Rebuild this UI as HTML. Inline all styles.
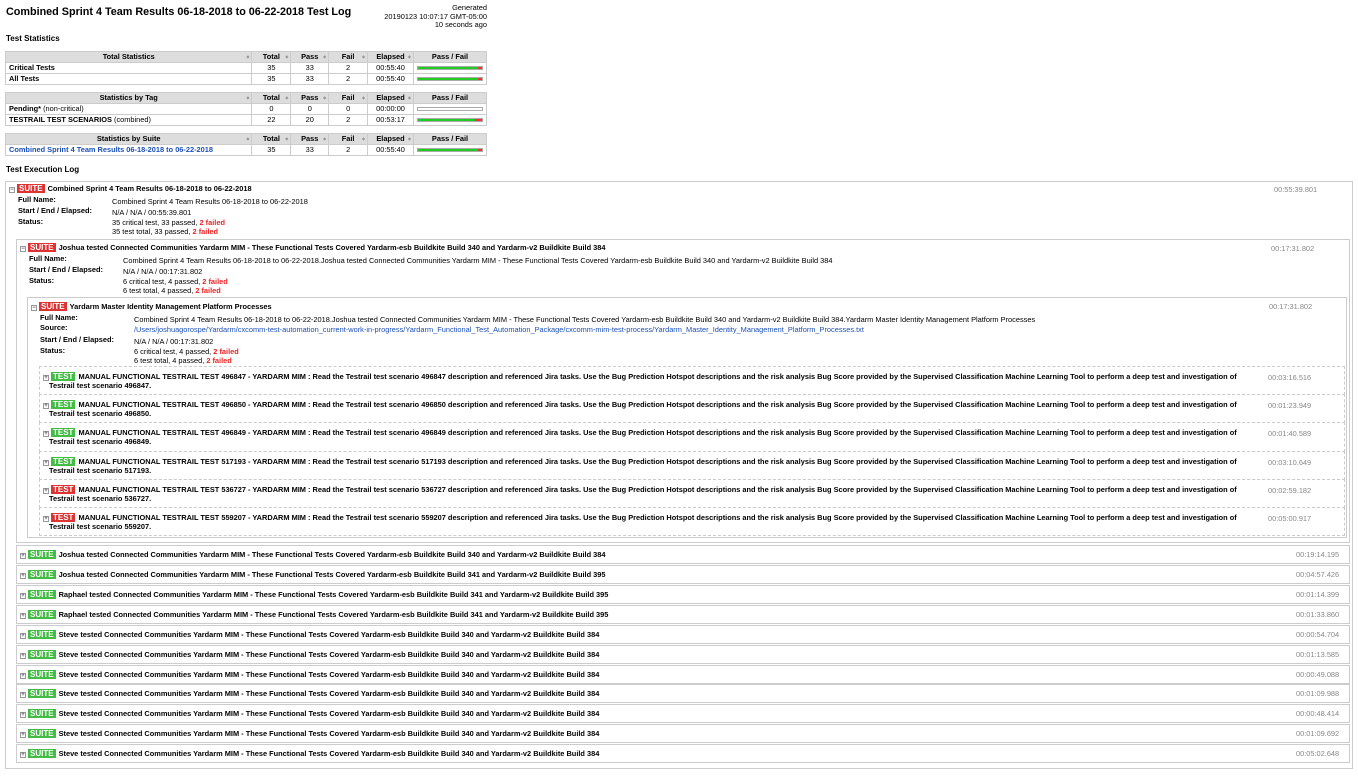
<!DOCTYPE html>
<html><head><meta charset="utf-8"><style>
*{margin:0;padding:0;box-sizing:border-box}
body{width:1358px;height:778px;background:#fff;font-family:"Liberation Sans",Arial,sans-serif;color:#000;position:relative;overflow:hidden;font-size:7.4px}
.a{position:absolute;white-space:nowrap}
.b{font-weight:bold}
h1{position:absolute;left:6px;top:6px;font-size:10.8px;font-weight:bold;white-space:nowrap}
.gen{position:absolute;right:871px;top:4px;text-align:right;font-size:7.4px;line-height:8.5px}
table{position:absolute;left:5px;width:482px;border-collapse:collapse;font-size:7.4px}
td,th{border:1px solid #ccc;height:11px;padding:0 3px;line-height:10px}
th{background:#ddd;font-weight:bold;position:relative}
th.s:after{content:"\25C6";position:absolute;right:2px;top:0;font-size:4px;color:#999}
td.n{text-align:center}
.bar{height:4px;width:66px;margin:0 auto;background:#2c2;border:1px solid #aaa;position:relative}
.bar i{position:absolute;right:0;top:0;height:2px;width:4px;background:#e33}
.box{position:absolute;border:1px solid #ccc}
.tb{position:absolute;border:1px dashed #ccc;border-right-style:dashed}
.bd{display:inline-block;color:#fff;font-weight:bold;font-size:8px;line-height:9px;padding:0 2px;margin-right:3px;vertical-align:0}
.r{background:#d33}.g{background:#4b4}
.pm{display:inline-block;width:6px;height:6px;border:1px solid #999;font-size:6px;line-height:4px;text-align:center;color:#555;margin-right:2px;vertical-align:0}
.el{position:absolute;color:#888;white-space:nowrap}
.f{color:#e22}
.lnk{color:#1a4fb8}
</style></head><body>
<h1>Combined Sprint 4 Team Results 06-18-2018 to 06-22-2018 Test Log</h1>
<div class="gen">Generated<br>20190123 10:07:17 GMT-05:00<br>10 seconds ago</div>
<div class="a b" style="left:6px;top:34px;font-size:8px">Test Statistics</div>
<table style="top:51px"><tr><th class="s" style="width:248px">Total Statistics</th><th class="s" style="width:39px">Total</th><th class="s" style="width:38px">Pass</th><th class="s" style="width:39px">Fail</th><th class="s" style="width:46px">Elapsed</th><th>Pass / Fail</th></tr>
<tr><td class="b">Critical Tests</td><td class="n">35</td><td class="n">33</td><td class="n">2</td><td class="n">00:55:40</td><td><div class="bar"><i></i></div></td></tr>
<tr><td class="b">All Tests</td><td class="n">35</td><td class="n">33</td><td class="n">2</td><td class="n">00:55:40</td><td><div class="bar"><i></i></div></td></tr></table>
<table style="top:92px"><tr><th class="s" style="width:248px">Statistics by Tag</th><th class="s" style="width:39px">Total</th><th class="s" style="width:38px">Pass</th><th class="s" style="width:39px">Fail</th><th class="s" style="width:46px">Elapsed</th><th>Pass / Fail</th></tr>
<tr><td><b>Pending*</b> (non-critical)</td><td class="n">0</td><td class="n">0</td><td class="n">0</td><td class="n">00:00:00</td><td><div class="bar" style="background:#fff"></div></td></tr>
<tr><td><b>TESTRAIL TEST SCENARIOS</b> (combined)</td><td class="n">22</td><td class="n">20</td><td class="n">2</td><td class="n">00:53:17</td><td><div class="bar"><i style="width:7px"></i></div></td></tr></table>
<table style="top:133px"><tr><th class="s" style="width:248px">Statistics by Suite</th><th class="s" style="width:39px">Total</th><th class="s" style="width:38px">Pass</th><th class="s" style="width:39px">Fail</th><th class="s" style="width:46px">Elapsed</th><th>Pass / Fail</th></tr>
<tr><td class="b lnk">Combined Sprint 4 Team Results 06-18-2018 to 06-22-2018</td><td class="n">35</td><td class="n">33</td><td class="n">2</td><td class="n">00:55:40</td><td><div class="bar"><i></i></div></td></tr></table>
<div class="a b" style="left:6px;top:165px;font-size:8px">Test Execution Log</div>

<div class="box" style="left:5px;top:181px;width:1348px;height:588px"></div>
<div class="a b" style="left:9px;top:184px"><span class="pm">−</span><span class="bd r">SUITE</span>Combined Sprint 4 Team Results 06-18-2018 to 06-22-2018</div>
<div class="el" style="left:1274px;top:185px">00:55:39.801</div>
<div class="a b" style="left:18px;top:195px">Full Name:</div><div class="a" style="left:112px;top:197px">Combined Sprint 4 Team Results 06-18-2018 to 06-22-2018</div>
<div class="a b" style="left:18px;top:206px">Start / End / Elapsed:</div><div class="a" style="left:112px;top:208px">N/A / N/A / 00:55:39.801</div>
<div class="a b" style="left:18px;top:217px">Status:</div><div class="a" style="left:112px;top:219px;line-height:8.5px">35 critical test, 33 passed, <b class="f">2 failed</b><br>35 test total, 33 passed, <b class="f">2 failed</b></div>

<div class="box" style="left:16px;top:239px;width:1334px;height:304px"></div>
<div class="a b" style="left:20px;top:243px"><span class="pm">−</span><span class="bd r">SUITE</span>Joshua tested Connected Communities Yardarm MIM - These Functional Tests Covered Yardarm-esb Buildkite Build 340 and Yardarm-v2 Buildkite Build 384</div>
<div class="el" style="left:1271px;top:244px">00:17:31.802</div>
<div class="a b" style="left:29px;top:254px">Full Name:</div><div class="a" style="left:123px;top:256px">Combined Sprint 4 Team Results 06-18-2018 to 06-22-2018.Joshua tested Connected Communities Yardarm MIM - These Functional Tests Covered Yardarm-esb Buildkite Build 340 and Yardarm-v2 Buildkite Build 384</div>
<div class="a b" style="left:29px;top:265px">Start / End / Elapsed:</div><div class="a" style="left:123px;top:267px">N/A / N/A / 00:17:31.802</div>
<div class="a b" style="left:29px;top:276px">Status:</div><div class="a" style="left:123px;top:278px;line-height:8.5px">6 critical test, 4 passed, <b class="f">2 failed</b><br>6 test total, 4 passed, <b class="f">2 failed</b></div>

<div class="box" style="left:27px;top:297px;width:1320px;height:241px"></div>
<div class="a b" style="left:31px;top:302px"><span class="pm">−</span><span class="bd r">SUITE</span>Yardarm Master Identity Management Platform Processes</div>
<div class="el" style="left:1269px;top:302px">00:17:31.802</div>
<div class="a b" style="left:40px;top:313px">Full Name:</div><div class="a" style="left:134px;top:315px">Combined Sprint 4 Team Results 06-18-2018 to 06-22-2018.Joshua tested Connected Communities Yardarm MIM - These Functional Tests Covered Yardarm-esb Buildkite Build 340 and Yardarm-v2 Buildkite Build 384.Yardarm Master Identity Management Platform Processes</div>
<div class="a b" style="left:40px;top:323px">Source:</div><div class="a lnk" style="left:134px;top:325px">/Users/joshuagorospe/Yardarm/cxcomm-test-automation_current-work-in-progress/Yardarm_Functional_Test_Automation_Package/cxcomm-mim-test-process/Yardarm_Master_Identity_Management_Platform_Processes.txt</div>
<div class="a b" style="left:40px;top:335px">Start / End / Elapsed:</div><div class="a" style="left:134px;top:337px">N/A / N/A / 00:17:31.802</div>
<div class="a b" style="left:40px;top:346px">Status:</div><div class="a" style="left:134px;top:348px;line-height:8.5px">6 critical test, 4 passed, <b class="f">2 failed</b><br>6 test total, 4 passed, <b class="f">2 failed</b></div>

<div class="tb" style="left:39px;top:366px;width:1306px;height:29px"></div>
<div class="a b" style="left:43px;top:372px;line-height:8.5px"><span class="pm">+</span><span class="bd g">TEST</span>MANUAL FUNCTIONAL TESTRAIL TEST 496847 - YARDARM MIM : Read the Testrail test scenario 496847 description and referenced Jira tasks. Use the Bug Prediction Hotspot descriptions and the risk analysis Bug Score provided by the Supervised Classification Machine Learning Tool to perform a deep test and investigation of<br><span style="margin-left:6px">Testrail test scenario 496847.</span></div>
<div class="el" style="left:1268px;top:373px">00:03:16.516</div>
<div class="tb" style="left:39px;top:394px;width:1306px;height:29px"></div>
<div class="a b" style="left:43px;top:400px;line-height:8.5px"><span class="pm">+</span><span class="bd g">TEST</span>MANUAL FUNCTIONAL TESTRAIL TEST 496850 - YARDARM MIM : Read the Testrail test scenario 496850 description and referenced Jira tasks. Use the Bug Prediction Hotspot descriptions and the risk analysis Bug Score provided by the Supervised Classification Machine Learning Tool to perform a deep test and investigation of<br><span style="margin-left:6px">Testrail test scenario 496850.</span></div>
<div class="el" style="left:1268px;top:401px">00:01:23.949</div>
<div class="tb" style="left:39px;top:422px;width:1306px;height:30px"></div>
<div class="a b" style="left:43px;top:428px;line-height:8.5px"><span class="pm">+</span><span class="bd g">TEST</span>MANUAL FUNCTIONAL TESTRAIL TEST 496849 - YARDARM MIM : Read the Testrail test scenario 496849 description and referenced Jira tasks. Use the Bug Prediction Hotspot descriptions and the risk analysis Bug Score provided by the Supervised Classification Machine Learning Tool to perform a deep test and investigation of<br><span style="margin-left:6px">Testrail test scenario 496849.</span></div>
<div class="el" style="left:1268px;top:429px">00:01:40.589</div>
<div class="tb" style="left:39px;top:451px;width:1306px;height:29px"></div>
<div class="a b" style="left:43px;top:457px;line-height:8.5px"><span class="pm">+</span><span class="bd g">TEST</span>MANUAL FUNCTIONAL TESTRAIL TEST 517193 - YARDARM MIM : Read the Testrail test scenario 517193 description and referenced Jira tasks. Use the Bug Prediction Hotspot descriptions and the risk analysis Bug Score provided by the Supervised Classification Machine Learning Tool to perform a deep test and investigation of<br><span style="margin-left:6px">Testrail test scenario 517193.</span></div>
<div class="el" style="left:1268px;top:458px">00:03:10.649</div>
<div class="tb" style="left:39px;top:479px;width:1306px;height:29px"></div>
<div class="a b" style="left:43px;top:485px;line-height:8.5px"><span class="pm">+</span><span class="bd r">TEST</span>MANUAL FUNCTIONAL TESTRAIL TEST 536727 - YARDARM MIM : Read the Testrail test scenario 536727 description and referenced Jira tasks. Use the Bug Prediction Hotspot descriptions and the risk analysis Bug Score provided by the Supervised Classification Machine Learning Tool to perform a deep test and investigation of<br><span style="margin-left:6px">Testrail test scenario 536727.</span></div>
<div class="el" style="left:1268px;top:486px">00:02:59.182</div>
<div class="tb" style="left:39px;top:507px;width:1306px;height:29px"></div>
<div class="a b" style="left:43px;top:513px;line-height:8.5px"><span class="pm">+</span><span class="bd r">TEST</span>MANUAL FUNCTIONAL TESTRAIL TEST 559207 - YARDARM MIM : Read the Testrail test scenario 559207 description and referenced Jira tasks. Use the Bug Prediction Hotspot descriptions and the risk analysis Bug Score provided by the Supervised Classification Machine Learning Tool to perform a deep test and investigation of<br><span style="margin-left:6px">Testrail test scenario 559207.</span></div>
<div class="el" style="left:1268px;top:514px">00:05:00.917</div>

<div class="box" style="left:16px;top:545px;width:1334px;height:19px"></div><div class="a b" style="left:20px;top:550px"><span class="pm">+</span><span class="bd g">SUITE</span>Joshua tested Connected Communities Yardarm MIM - These Functional Tests Covered Yardarm-esb Buildkite Build 340 and Yardarm-v2 Buildkite Build 384</div><div class="el" style="left:1296px;top:550px">00:19:14.195</div>
<div class="box" style="left:16px;top:565px;width:1334px;height:19px"></div><div class="a b" style="left:20px;top:570px"><span class="pm">+</span><span class="bd g">SUITE</span>Joshua tested Connected Communities Yardarm MIM - These Functional Tests Covered Yardarm-esb Buildkite Build 341 and Yardarm-v2 Buildkite Build 395</div><div class="el" style="left:1296px;top:570px">00:04:57.426</div>
<div class="box" style="left:16px;top:585px;width:1334px;height:19px"></div><div class="a b" style="left:20px;top:590px"><span class="pm">+</span><span class="bd g">SUITE</span>Raphael tested Connected Communities Yardarm MIM - These Functional Tests Covered Yardarm-esb Buildkite Build 341 and Yardarm-v2 Buildkite Build 395</div><div class="el" style="left:1296px;top:590px">00:01:14.399</div>
<div class="box" style="left:16px;top:605px;width:1334px;height:19px"></div><div class="a b" style="left:20px;top:610px"><span class="pm">+</span><span class="bd g">SUITE</span>Raphael tested Connected Communities Yardarm MIM - These Functional Tests Covered Yardarm-esb Buildkite Build 341 and Yardarm-v2 Buildkite Build 395</div><div class="el" style="left:1296px;top:610px">00:01:33.860</div>
<div class="box" style="left:16px;top:625px;width:1334px;height:19px"></div><div class="a b" style="left:20px;top:630px"><span class="pm">+</span><span class="bd g">SUITE</span>Steve tested Connected Communities Yardarm MIM - These Functional Tests Covered Yardarm-esb Buildkite Build 340 and Yardarm-v2 Buildkite Build 384</div><div class="el" style="left:1296px;top:630px">00:00:54.704</div>
<div class="box" style="left:16px;top:645px;width:1334px;height:19px"></div><div class="a b" style="left:20px;top:650px"><span class="pm">+</span><span class="bd g">SUITE</span>Steve tested Connected Communities Yardarm MIM - These Functional Tests Covered Yardarm-esb Buildkite Build 340 and Yardarm-v2 Buildkite Build 384</div><div class="el" style="left:1296px;top:650px">00:01:13.585</div>
<div class="box" style="left:16px;top:665px;width:1334px;height:19px"></div><div class="a b" style="left:20px;top:670px"><span class="pm">+</span><span class="bd g">SUITE</span>Steve tested Connected Communities Yardarm MIM - These Functional Tests Covered Yardarm-esb Buildkite Build 340 and Yardarm-v2 Buildkite Build 384</div><div class="el" style="left:1296px;top:670px">00:00:49.088</div>
<div class="box" style="left:16px;top:684px;width:1334px;height:19px"></div><div class="a b" style="left:20px;top:689px"><span class="pm">+</span><span class="bd g">SUITE</span>Steve tested Connected Communities Yardarm MIM - These Functional Tests Covered Yardarm-esb Buildkite Build 340 and Yardarm-v2 Buildkite Build 384</div><div class="el" style="left:1296px;top:689px">00:01:09.988</div>
<div class="box" style="left:16px;top:704px;width:1334px;height:19px"></div><div class="a b" style="left:20px;top:709px"><span class="pm">+</span><span class="bd g">SUITE</span>Steve tested Connected Communities Yardarm MIM - These Functional Tests Covered Yardarm-esb Buildkite Build 340 and Yardarm-v2 Buildkite Build 384</div><div class="el" style="left:1296px;top:709px">00:00:48.414</div>
<div class="box" style="left:16px;top:724px;width:1334px;height:19px"></div><div class="a b" style="left:20px;top:729px"><span class="pm">+</span><span class="bd g">SUITE</span>Steve tested Connected Communities Yardarm MIM - These Functional Tests Covered Yardarm-esb Buildkite Build 340 and Yardarm-v2 Buildkite Build 384</div><div class="el" style="left:1296px;top:729px">00:01:09.692</div>
<div class="box" style="left:16px;top:744px;width:1334px;height:19px"></div><div class="a b" style="left:20px;top:749px"><span class="pm">+</span><span class="bd g">SUITE</span>Steve tested Connected Communities Yardarm MIM - These Functional Tests Covered Yardarm-esb Buildkite Build 340 and Yardarm-v2 Buildkite Build 384</div><div class="el" style="left:1296px;top:749px">00:05:02.648</div>
</body></html>
